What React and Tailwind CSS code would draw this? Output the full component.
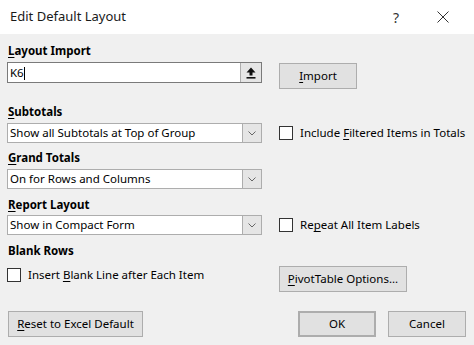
import React from 'react'

const font = { fontFamily: '"Noto Sans", "Open Sans", sans-serif' }

function U({ children }) {
  return <span className="underline underline-offset-2">{children}</span>
}

function Label({ children, className = '' }) {
  return <div className={`h-[16px] leading-[16px] text-[11.5px] font-bold text-black ${className}`}>{children}</div>
}

function Select({ value }) {
  return (
    <div className="flex h-[20px] w-[255px] border border-[#adadad] bg-white">
      <div className="flex-1 pl-[2px] text-[11.5px] leading-[18px] text-black">{value}</div>
      <div className="flex w-[19px] items-center justify-center border-l border-[#adadad] bg-[#e5e5e5]">
        <svg width="8" height="5" viewBox="0 0 8 5">
          <path d="M0.5 0.5 L4 4 L7.5 0.5" fill="none" stroke="#666" strokeWidth="1" />
        </svg>
      </div>
    </div>
  )
}

function Check({ children, className = '' }) {
  return (
    <div className={`flex items-center ${className}`}>
      <div className="h-[14px] w-[14px] border border-[#333] bg-white" />
      <span className="ml-[7px] text-[11.5px] text-black">{children}</span>
    </div>
  )
}

function Button({ children, className = '' }) {
  return (
    <div className={`flex h-[26px] items-center justify-center border border-[#adadad] bg-[#e1e1e1] text-[11.5px] text-black ${className}`}>
      {children}
    </div>
  )
}

export default function App() {
  return (
    <div className="flex h-[345px] w-[474px] flex-col overflow-hidden" style={font}>
      {/* title bar */}
      <div className="flex h-[34px] items-center bg-white">
        <span className="ml-[10px] text-[13px] text-[#1a1a1a]">Edit Default Layout</span>
        <span className="ml-auto mr-[38px] text-[14px] text-[#333]">?</span>
        <svg className="mr-[25px]" width="12" height="12" viewBox="0 0 12 12">
          <path d="M0.5 0.5 L11.5 11.5 M11.5 0.5 L0.5 11.5" stroke="#333" strokeWidth="1" />
        </svg>
      </div>

      <div className="flex-1 bg-[#f0f0f0] pl-[7px]">
        <Label className="mt-[9px] ml-[1px]"><U>L</U>ayout Import</Label>
        <div className="mt-[3px] flex items-start">
          <div className="flex h-[21px] w-[255px] border border-[#7a7a7a] bg-white">
            <div className="flex-1 pl-[2px] text-[11.5px] leading-[19px] text-black">K6<span className="inline-block h-[13px] w-px bg-black align-middle" /></div>
            <div className="flex w-[21px] items-center justify-center border-l border-[#adadad] bg-[#e5e5e5]">
              <svg width="10" height="12" viewBox="0 0 10 12">
                <path d="M5 0.5 L9.5 5.5 L6.5 5.5 L6.5 8.5 L3.5 8.5 L3.5 5.5 L0.5 5.5 Z" fill="#111" />
                <rect x="0.5" y="10" width="9" height="1.6" fill="#111" />
              </svg>
            </div>
          </div>
          <Button className="ml-[17px] mt-[1px] h-[25px] w-[78px]"><U>I</U>mport</Button>
        </div>

        <Label className="mt-[15px] ml-[1px]"><U>S</U>ubtotals</Label>
        <div className="mt-[3px] flex items-center">
          <Select value="Show all Subtotals at Top of Group" />
          <Check className="ml-[17px]">Include <U>F</U>iltered Items in Totals</Check>
        </div>

        <Label className="mt-[7px] ml-[1px]"><U>G</U>rand Totals</Label>
        <div className="mt-[3px] flex">
          <Select value="On for Rows and Columns" />
        </div>

        <Label className="mt-[8px] ml-[1px]"><U>R</U>eport Layout</Label>
        <div className="mt-[2px] flex items-center">
          <Select value="Show in Compact Form" />
          <Check className="ml-[17px]">Re<U>p</U>eat All Item Labels</Check>
        </div>

        <Label className="mt-[8px] ml-[1px]">Blank Rows</Label>
        <div className="mt-[7px] flex items-start">
          <Check className="w-[272px]">Insert <U>B</U>lank Line after Each Item</Check>
          <Button className="h-[25px] w-[128px]"><U>P</U>ivotTable Options...</Button>
        </div>

        <div className="mt-[19px] flex">
          <Button className="ml-[1px] w-[135px]"><U>R</U>eset to Excel Default</Button>
          <Button className="ml-[155px] w-[78px] border-2 border-[#0078d7]">OK</Button>
          <Button className="ml-[12px] w-[78px]">Cancel</Button>
        </div>
      </div>
    </div>
  )
}
